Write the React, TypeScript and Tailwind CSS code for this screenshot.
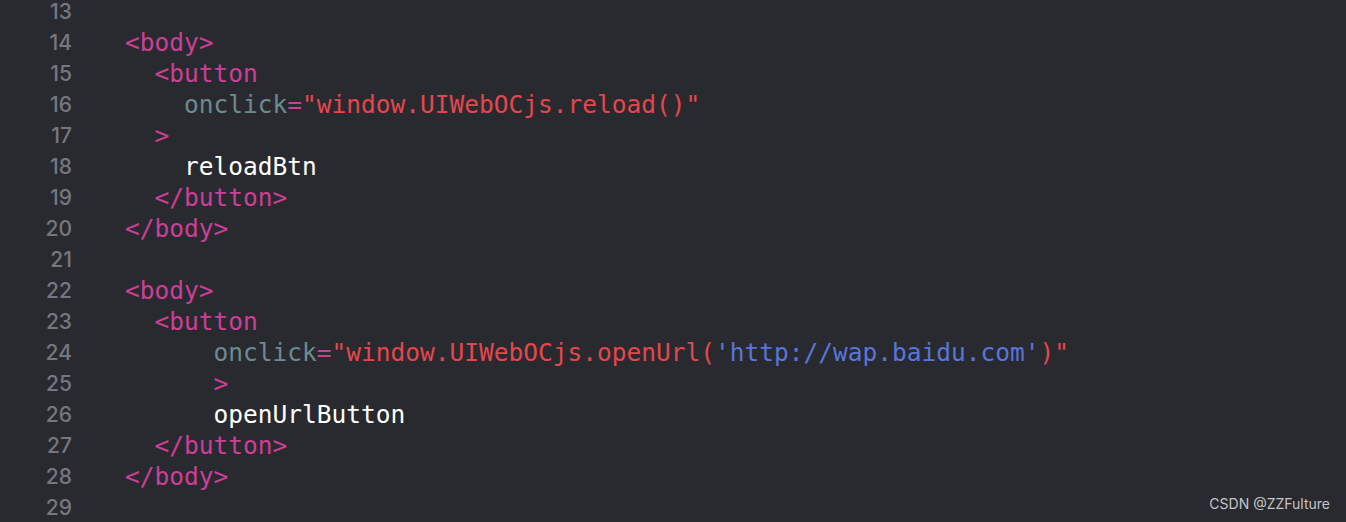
import React from 'react';

type Tok = { t: string; c: string };

const tag = 'text-[#cc3f97]';
const attr = 'text-[#6c8b90]';
const str = 'text-[#e5464c]';
const url = 'text-[#5876da]';
const plain = 'text-white';

const lines: { n: number; indent: number; toks: Tok[] }[] = [
  { n: 13, indent: 0, toks: [] },
  { n: 14, indent: 0, toks: [{ t: '<body>', c: tag }] },
  { n: 15, indent: 2, toks: [{ t: '<button', c: tag }] },
  {
    n: 16,
    indent: 4,
    toks: [
      { t: 'onclick', c: attr },
      { t: '=', c: tag },
      { t: '"window.UIWebOCjs.reload()"', c: str },
    ],
  },
  { n: 17, indent: 2, toks: [{ t: '>', c: tag }] },
  { n: 18, indent: 4, toks: [{ t: 'reloadBtn', c: plain }] },
  { n: 19, indent: 2, toks: [{ t: '</button>', c: tag }] },
  { n: 20, indent: 0, toks: [{ t: '</body>', c: tag }] },
  { n: 21, indent: 0, toks: [] },
  { n: 22, indent: 0, toks: [{ t: '<body>', c: tag }] },
  { n: 23, indent: 2, toks: [{ t: '<button', c: tag }] },
  {
    n: 24,
    indent: 6,
    toks: [
      { t: 'onclick', c: attr },
      { t: '=', c: tag },
      { t: '"window.UIWebOCjs.openUrl(', c: str },
      { t: "'http://wap.baidu.com'", c: url },
      { t: ')"', c: str },
    ],
  },
  { n: 25, indent: 6, toks: [{ t: '>', c: tag }] },
  { n: 26, indent: 6, toks: [{ t: 'openUrlButton', c: plain }] },
  { n: 27, indent: 2, toks: [{ t: '</button>', c: tag }] },
  { n: 28, indent: 0, toks: [{ t: '</body>', c: tag }] },
  { n: 29, indent: 0, toks: [] },
];

export default function App() {
  return (
    <div className="relative w-[1346px] h-[522px] overflow-hidden bg-[#292a30]">
      <div className="flex flex-col -mt-[4px]">
        {lines.map((line) => (
          <div key={line.n} className="flex items-center h-[31px]">
            <span className="w-[72px] text-right text-[21px] font-medium text-[#75777e] font-['Inter',sans-serif]">
              {line.n}
            </span>
            <pre className="ml-[53px] text-[24.5px] leading-[31px] font-['DejaVu_Sans_Mono',monospace]">
              {' '.repeat(line.indent)}
              {line.toks.map((tk, i) => (
                <span key={i} className={tk.c}>
                  {tk.t}
                </span>
              ))}
            </pre>
          </div>
        ))}
      </div>
      <span className="absolute right-[16px] bottom-[8px] text-[14px] text-[#c4c4c6] font-['Inter',sans-serif]">
        CSDN @ZZFulture
      </span>
    </div>
  );
}
